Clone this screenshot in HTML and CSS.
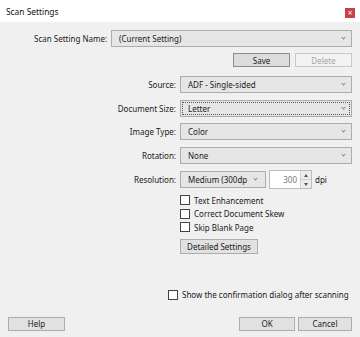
FILE: index.html
```html
<!DOCTYPE html>
<html>
<head>
<meta charset="utf-8">
<link rel="stylesheet" href="styles.css">
</head>
<body>
<div class="window">
  <div class="titlebar">
    <span class="title">Scan Settings</span>
    <span class="close">×</span>
  </div>
  <div class="content">
    <div class="name-row">
      <span class="name-label">Scan Setting Name:</span>
      <div class="select wide"><span>(Current Setting)</span><span class="caret"></span></div>
    </div>
    <div class="save-row">
      <div class="btn save">Save</div>
      <div class="btn disabled">Delete</div>
    </div>
    <div class="form">
      <span class="label">Source:</span>
      <div class="select"><span>ADF - Single-sided</span><span class="caret"></span></div>
      <span class="label">Document Size:</span>
      <div class="select focus"><span>Letter</span><span class="caret"></span></div>
      <span class="label">Image Type:</span>
      <div class="select"><span>Color</span><span class="caret"></span></div>
      <span class="label">Rotation:</span>
      <div class="select"><span>None</span><span class="caret"></span></div>
      <span class="label">Resolution:</span>
      <div class="res">
        <div class="select small"><span>Medium (300dp</span><span class="caret"></span></div>
        <div class="spin">
          <span class="spin-val">300</span>
          <span class="spin-btns"><span class="up"></span><span class="down"></span></span>
        </div>
        <span class="dpi">dpi</span>
      </div>
    </div>
    <div class="checks">
      <label class="check"><span class="box"></span>Text Enhancement</label>
      <label class="check"><span class="box"></span>Correct Document Skew</label>
      <label class="check"><span class="box"></span>Skip Blank Page</label>
      <div class="btn detail">Detailed Settings</div>
    </div>
    <label class="check confirm"><span class="box"></span>Show the confirmation dialog after scanning</label>
    <div class="bottom">
      <div class="btn">Help</div>
      <div class="right">
        <div class="btn">OK</div>
        <div class="btn">Cancel</div>
      </div>
    </div>
  </div>
</div>
</body>
</html>
```

FILE: styles.css
```css
* { box-sizing: border-box; }
html, body { margin: 0; padding: 0; }
body {
  width: 360px;
  height: 337px;
  overflow: hidden;
  font-family: "Noto Sans", "Open Sans", sans-serif;
  font-size: 8px;
  color: #1a1a1a;
  background: #f0f0f0;
}
.window {
  display: flex;
  flex-direction: column;
  height: 337px;
}
.titlebar {
  height: 22px;
  background: #ffffff;
  display: flex;
  align-items: center;
  justify-content: space-between;
  padding: 0 5px 0 6px;
}
.title { font-size: 8.4px; color: #111; }
.close {
  width: 10px;
  height: 10px;
  background: #c9404a;
  color: #fff;
  font-size: 8px;
  line-height: 10px;
  text-align: center;
  margin-top: 4px;
}
.content {
  flex: 1;
  background: #f0f0f0;
  padding: 8px 8px 0 8px;
  display: flex;
  flex-direction: column;
}
.name-row {
  display: flex;
  align-items: center;
  gap: 4px;
  padding-left: 26px;
}
.name-label { width: 73px; text-align: right; white-space: nowrap; }
.select {
  height: 17px;
  background: #e6e6e6;
  border: 1px solid #acacac;
  display: flex;
  align-items: center;
  justify-content: space-between;
  padding: 0 6px 0 7px;
  white-space: nowrap;
  overflow: hidden;
}
.select.wide { width: 241px; }
.caret {
  flex: none;
  width: 3px;
  height: 3px;
  border-right: 1px solid #888;
  border-bottom: 1px solid #888;
  transform: rotate(45deg);
  margin-top: -2px;
}
.select.focus { outline: 1px dotted #555; outline-offset: -3px; }
.save-row {
  display: flex;
  justify-content: flex-end;
  gap: 5px;
  margin-top: 6px;
}
.btn {
  height: 14px;
  width: 57px;
  background: #e1e1e1;
  border: 1px solid #adadad;
  display: flex;
  align-items: center;
  justify-content: center;
  white-space: nowrap;
}
.btn.save { border-color: #8c8c8c; background: #dcdcdc; }
.btn.disabled { color: #a3a3a3; background: #f3f3f3; border-color: #c9c9c9; }
.form {
  margin-top: 9px;
  display: grid;
  grid-template-columns: 168px 172px;
  column-gap: 4px;
  row-gap: 6.5px;
  align-items: center;
}
.label { text-align: right; white-space: nowrap; }
.form .select { height: 17px; }
.res { display: flex; align-items: center; }
.select.small { width: 86px; padding-right: 8px; }
.spin {
  margin-left: 3px;
  width: 43px;
  height: 19px;
  background: #fff;
  border: 1px solid #bcbcbc;
  display: flex;
  align-items: center;
  justify-content: flex-end;
}
.spin-val { color: #777; padding-right: 3px; }
.spin-btns {
  width: 11px;
  height: 17px;
  display: flex;
  flex-direction: column;
  border-left: 1px solid #d0d0d0;
}
.spin-btns span {
  flex: 1;
  background: #ececec;
  position: relative;
}
.spin-btns .up { border-bottom: 1px solid #d0d0d0; }
.spin-btns .up::after, .spin-btns .down::after {
  content: "";
  position: absolute;
  left: 3px;
  top: 2.5px;
  border-left: 2.5px solid transparent;
  border-right: 2.5px solid transparent;
}
.spin-btns .up::after { border-bottom: 3px solid #555; }
.spin-btns .down::after { border-top: 3px solid #555; }
.dpi { margin-left: 3px; }
.checks {
  margin-left: 172px;
  margin-top: 6px;
  display: flex;
  flex-direction: column;
  gap: 3.5px;
}
.check {
  display: flex;
  align-items: center;
  gap: 4px;
  height: 10px;
  white-space: nowrap;
}
.box {
  width: 10px;
  height: 10px;
  border: 1px solid #444;
  background: #fff;
  flex: none;
}
.btn.detail { width: 78px; margin-top: 3px; height: 15px; }
.confirm { margin-left: 160px; margin-top: 36px; }
.bottom {
  margin-top: 17px;
  display: flex;
  justify-content: space-between;
}
.right { display: flex; gap: 3px; }
.right .btn:first-child { width: 56px; }
.right .btn:last-child { width: 54px; }
```
